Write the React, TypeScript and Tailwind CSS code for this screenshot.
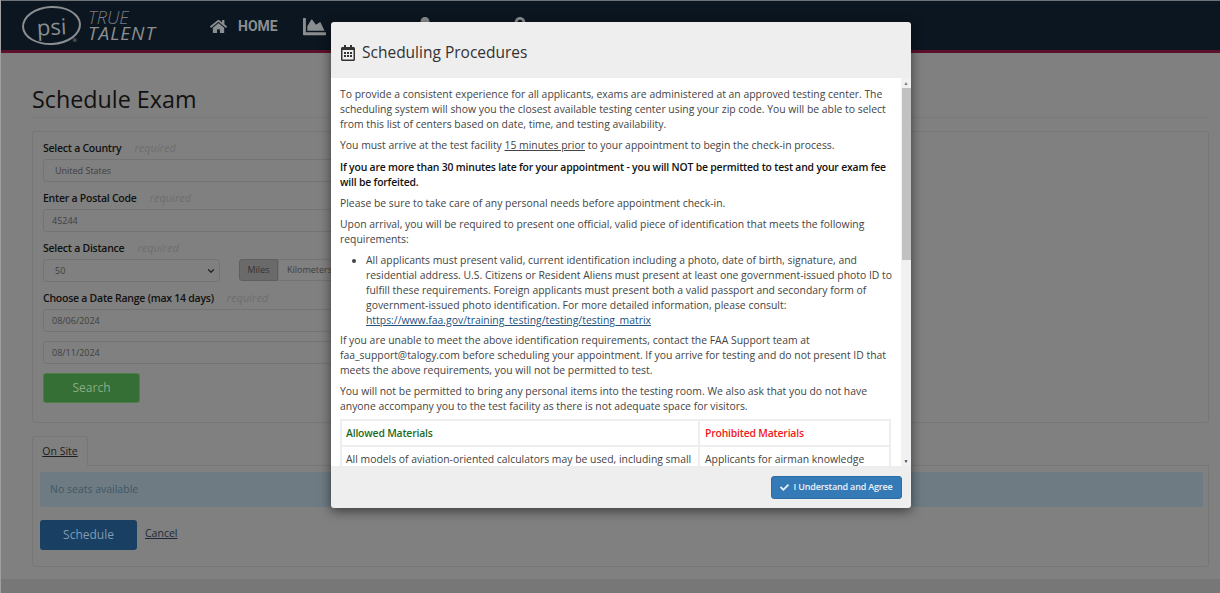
import { FaRegCalendarAlt, FaCheck, FaHome, FaChartArea, FaUser, FaUnlock } from 'react-icons/fa';
import { ChevronDown } from 'lucide-react';

const font = { fontFamily: '"Open Sans", sans-serif' };

function FieldLabel({ label }: { label: string }) {
    return (
        <div className="flex items-baseline h-[20px] pt-[1px] text-[10.5px] font-semibold tracking-[-0.25px] text-[#111]">
            <span>{label}</span>
            <span className="ml-[13px] italic font-normal tracking-normal text-[11px] text-[#6e6e6e]">required</span>
        </div>
    );
}

function Field({ value, pl = 'pl-[8px]' }: { value: string; pl?: string }) {
    return (
        <div className={`h-[23px] flex items-center ${pl} border border-[#747474] rounded-[3px] text-[9px] text-[#3f3f3f]`}>
            {value}
        </div>
    );
}

function Background() {
    return (
        <div className="w-[1220px] h-[593px] bg-[#808080] border-l border-[#a0a0a0] flex flex-col overflow-hidden">
            <header className="h-[53px] shrink-0 bg-[#0c1620] border-t border-[#6f7276] border-b-[3px] border-b-[#5d1029] flex items-center">
                <div className="w-[170px] ml-[21px] flex items-center text-[#8b8e91]">
                    <div className="relative w-[59px] h-[39px] border-2 border-[#8b8e91] rounded-[50%] flex items-center justify-center text-[22px] leading-none -rotate-3">
                        psi
                        <span className="absolute right-[3px] bottom-[-1px] text-[5px] leading-none">®</span>
                    </div>
                    <div className="ml-[7px] flex flex-col italic text-[#777b7f]">
                        <span className="text-[18px] leading-[15px] font-light">TRUE</span>
                        <span className="text-[19px] leading-[17px] font-medium tracking-[1px] text-[#8b8e91]">TALENT</span>
                    </div>
                </div>
                <nav className="flex items-center mt-[1px] ml-[18px] text-[#8b8e91] font-bold text-[14px]" style={{ fontFamily: 'Roboto, sans-serif' }}>
                    <FaHome size={17} />
                    <span className="ml-[11px]">HOME</span>
                    <FaChartArea size={23} className="ml-[25px]" />
                    <span className="ml-[9px] mt-[6px] w-[81px]">PROFILE</span>
                    <FaUser size={18} />
                    <span className="ml-[9px] mt-[6px] w-[68px]">PROFILE</span>
                    <FaUnlock size={18} />
                    <span className="ml-[9px] mt-[6px]">ACCOUNT</span>
                </nav>
            </header>

            <div className="flex-1 pl-[31px] pr-[32px]">
                <h1 className="h-[65px] mb-[13px] mr-[-22px] pt-[28px] border-b border-[#7a7a7a] text-[23.3px] leading-[36px] text-[#111]">Schedule Exam</h1>
                <section className="h-[292px] mr-[-21px] border border-[#777] rounded-[3px] px-[10px] pt-[7px]">
                    <FieldLabel label="Select a Country" />
                    <div className="w-[320px]"><Field value="United States" pl="pl-[11px]" /></div>
                    <div className="h-[7px]" />
                    <FieldLabel label="Enter a Postal Code" />
                    <div className="w-[320px]"><Field value="45244" /></div>
                    <div className="h-[7px]" />
                    <FieldLabel label="Select a Distance" />
                    <div className="flex">
                        <div className="w-[177px] h-[23px] pl-[11px] pr-[3px] border border-[#747474] rounded-[3px] text-[9px] text-[#3f3f3f] flex items-center justify-between">
                            50
                            <ChevronDown size={10} strokeWidth={3} className="text-[#222]" />
                        </div>
                        <div className="ml-[19px] h-[22px] w-[39px] bg-[#6a6a6a] border border-[#5e5e5e] rounded-l-[3px] text-[9px] text-[#333] flex items-center justify-center">Miles</div>
                        <div className="h-[22px] w-[70px] border border-[#747474] text-[9px] text-[#3f3f3f] flex items-center pl-[8px]">Kilometers</div>
                    </div>
                    <div className="h-[7px]" />
                    <FieldLabel label="Choose a Date Range (max 14 days)" />
                    <div className="w-[320px]"><Field value="08/06/2024" /></div>
                    <div className="w-[320px] mt-[9px]"><Field value="08/11/2024" /></div>
                    <button className="mt-[9px] block w-[97px] h-[30px] bg-[#356f36] border border-[#4b8044] rounded-[3px] text-[12px] text-[#8aab85]">Search</button>
                </section>
                <div className="mt-[13px] w-[56px] h-[30px] mb-[-1px] relative bg-[#808080] border border-[#777] border-b-0 rounded-t-[3px] text-[10.5px] text-[#1d1d1d] flex items-center justify-center underline">On Site</div>
                <section className="h-[102px] mr-[-21px] border border-[#777] rounded-b-[3px] px-[7px] pt-[6px]">
                    <div className="h-[35px] w-[1163px] bg-[#6e7b83] rounded-[2px] pl-[10px] flex items-center text-[10.5px] text-[#3f5866]">No seats available</div>
                    <div className="mt-[13px] flex items-start">
                        <button className="w-[97px] h-[30px] bg-[#193f63] rounded-[3px] text-[12px] text-[#7f9ab3]">Schedule</button>
                        <a className="ml-[8px] mt-[6px] text-[10.5px] text-[#1e2a3a] underline">Cancel</a>
                    </div>
                </section>
            </div>
            <footer className="h-[14px] shrink-0 bg-[#777777]" />
        </div>
    );
}

function ScheduleModal() {
    return (
        <div className="absolute left-[331px] top-[22px] w-[580px] h-[486px] rounded-[3px] bg-[#eeeeee] shadow-[0_3px_12px_rgba(0,0,0,0.55)] flex flex-col overflow-hidden">
            <div className="h-[56px] shrink-0 flex items-center pl-[9px] pt-[6px] text-[#333]">
                <FaRegCalendarAlt size={16} />
                <h2 className="ml-[6px] text-[15.5px]">Scheduling Procedures</h2>
            </div>
            <div className="h-[388px] shrink-0 bg-white flex overflow-hidden">
                <div className="w-[570px] h-[388px] overflow-hidden pl-[9px] pr-[8px] pt-[9px] text-[10.4px] leading-[15px] text-[#444]">
                    <p className="mb-[6px]">To provide a consistent experience for all applicants, exams are administered at an approved testing center. The scheduling system will show you the closest available testing center using your zip code. You will be able to select from this list of centers based on date, time, and testing availability.</p>
                    <p className="mb-[7px]">You must arrive at the test facility <u>15 minutes prior</u> to your appointment to begin the check-in process.</p>
                    <p className="mb-[6px] pr-[4px] font-semibold tracking-[-0.18px] text-[#111]">If you are more than 30 minutes late for your appointment - you will NOT be permitted to test and your exam fee will be forfeited.</p>
                    <p className="mb-[6px]">Please be sure to take care of any personal needs before appointment check-in.</p>
                    <p className="mb-[6px]">Upon arrival, you will be required to present one official, valid piece of identification that meets the following requirements:</p>
                    <ul className="list-disc pl-[26px] mb-[5px]">
                        <li>All applicants must present valid, current identification including a photo, date of birth, signature, and residential address. U.S. Citizens or Resident Aliens must present at least one government-issued photo ID to fulfill these requirements. Foreign applicants must present both a valid passport and secondary form of government-issued photo identification. For more detailed information, please consult: <a className="text-[#23527c] underline">https://www.faa.gov/training_testing/testing/testing_matrix</a></li>
                    </ul>
                    <p className="mb-[6px] pr-[4px]">If you are unable to meet the above identification requirements, contact the FAA Support team at faa_support@talogy.com before scheduling your appointment. If you arrive for testing and do not present ID that meets the above requirements, you will not be permitted to test.</p>
                    <p className="mb-[5px] pr-[4px]">You will not be permitted to bring any personal items into the testing room. We also ask that you do not have anyone accompany you to the test facility as there is not adequate space for visitors.</p>
                    <table className="w-[551px] border-collapse table-fixed">
                        <tbody>
                            <tr className="h-[26px]">
                                <td className="w-[358px] border-2 border-[#eeeeee] px-[4px] font-semibold tracking-[-0.18px] text-[#1d6b1d]">Allowed Materials</td>
                                <td className="border-2 border-[#eeeeee] px-[5px] font-semibold tracking-[-0.18px] text-[#f01818]">Prohibited Materials</td>
                            </tr>
                            <tr>
                                <td className="border-2 border-[#eeeeee] px-[4px] py-[5px] align-top">All models of aviation-oriented calculators may be used, including small electronic calculators that perform only arithmetic functions.</td>
                                <td className="border-2 border-[#eeeeee] px-[5px] py-[5px] align-top">Applicants for airman knowledge tests may not use any written materials.</td>
                            </tr>
                        </tbody>
                    </table>
                </div>
                <div className="w-[10px] shrink-0 bg-[#f1f1f1] flex flex-col items-center">
                    <div className="h-[10px] flex items-center justify-center text-[#777] text-[5px] leading-none">▲</div>
                    <div className="w-[9px] h-[172px] bg-[#c1c1c1]" />
                    <div className="flex-1" />
                    <div className="h-[10px] flex items-center justify-center text-[#444] text-[5px] leading-none">▼</div>
                </div>
            </div>
            <div className="flex-1 flex items-center justify-end pr-[9px]">
                <button className="w-[131px] h-[23px] bg-[#337ab7] border border-[#2e6da4] rounded-[3px] text-[#eaf2f9] text-[9px] font-semibold tracking-[-0.18px] flex items-center justify-center">
                    <FaCheck size={9} />
                    <span className="ml-[4px]">I Understand and Agree</span>
                </button>
            </div>
        </div>
    );
}

export default function App() {
    return (
        <div className="relative w-[1220px] h-[593px] overflow-hidden" style={font}>
            <Background />
            <ScheduleModal />
        </div>
    );
}
